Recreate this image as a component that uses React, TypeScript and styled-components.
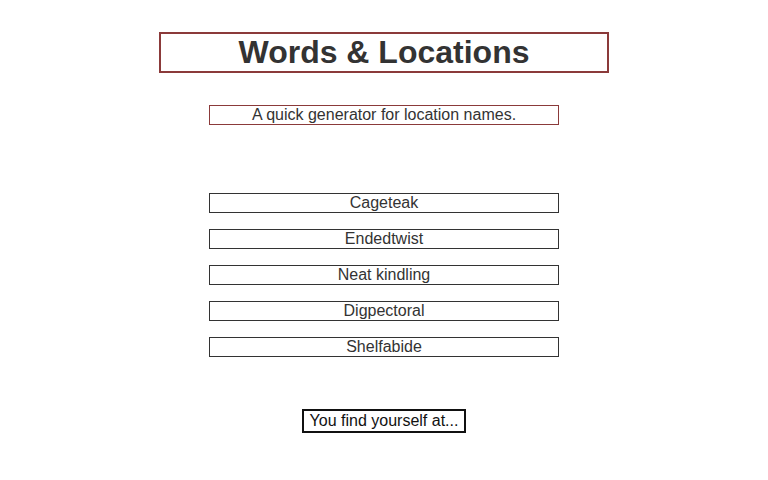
import React from "react";
import styled, { createGlobalStyle } from "styled-components";

const GlobalStyle = createGlobalStyle`
  html, body {
    margin: 0;
    padding: 0;
    background: #ffffff;
  }
  body {
    font-family: "Liberation Sans", Arial, sans-serif;
    color: #333333;
  }
`;

const Page = styled.main`
  display: flex;
  flex-direction: column;
  align-items: center;
  padding-top: 32px;
`;

const Title = styled.h1`
  box-sizing: border-box;
  width: 450px;
  height: 41px;
  margin: 0;
  border: 2px solid #8b3a3a;
  font-size: 32px;
  line-height: 37px;
  font-weight: bold;
  text-align: center;
  color: #333333;
`;

const Subtitle = styled.p`
  box-sizing: border-box;
  width: 350px;
  height: 20px;
  margin: 32px 0 0;
  border: 1px solid #8b3a3a;
  font-size: 16px;
  line-height: 18px;
  text-align: center;
`;

const NameList = styled.ul`
  list-style: none;
  margin: 68px 0 0;
  padding: 0;
  display: flex;
  flex-direction: column;
  gap: 16px;
`;

const NameItem = styled.li`
  box-sizing: border-box;
  width: 350px;
  height: 20px;
  border: 1px solid #333333;
  font-size: 16px;
  line-height: 18px;
  text-align: center;
  color: #333333;
`;

const GenerateButton = styled.button`
  box-sizing: border-box;
  margin-top: 52px;
  height: 24px;
  padding: 0 6px;
  border: 2px solid #111111;
  background: #ffffff;
  font-family: "Liberation Sans", Arial, sans-serif;
  font-size: 16px;
  line-height: 20px;
  color: #111111;
  cursor: pointer;
`;

const names = ["Cageteak", "Endedtwist", "Neat kindling", "Digpectoral", "Shelfabide"];

export default function App() {
  return (
    <>
      <GlobalStyle />
      <Page>
        <Title>Words &amp; Locations</Title>
        <Subtitle>A quick generator for location names.</Subtitle>
        <NameList>
          {names.map((n) => (
            <NameItem key={n}>{n}</NameItem>
          ))}
        </NameList>
        <GenerateButton>You find yourself at...</GenerateButton>
      </Page>
    </>
  );
}
